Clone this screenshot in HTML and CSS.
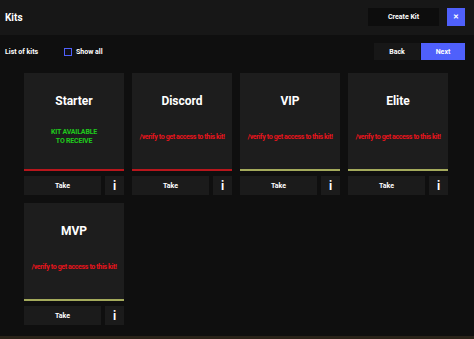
FILE: index.html
```html
<!DOCTYPE html>
<html lang="en">
<head>
    <meta charset="UTF-8">
    <meta name="viewport" content="width=device-width, initial-scale=1.0">
    <title>Kits</title>
    <link rel="stylesheet" href="styles.css">
</head>
<body>
    <div class="header">
        <h1>Kits</h1>
        <div class="header-actions">
            <button class="btn-dark create">Create Kit</button>
            <button class="btn-blue close">&#x2715;</button>
        </div>
    </div>

    <div class="toolbar">
        <span class="label">List of kits</span>
        <label class="show-all"><span class="checkbox"></span>Show all</label>
        <div class="pager">
            <button class="btn-dark back">Back</button>
            <button class="btn-blue next">Next</button>
        </div>
    </div>

    <div class="kits">
        <div class="kit">
            <div class="kit-panel red">
                <div class="kit-name">Starter</div>
                <div class="kit-status ok">KIT AVAILABLE<br>TO RECEIVE</div>
            </div>
            <div class="kit-actions"><button class="take">Take</button><button class="info">i</button></div>
        </div>
        <div class="kit">
            <div class="kit-panel red">
                <div class="kit-name">Discord</div>
                <div class="kit-status locked">/verify to get access to this kit!</div>
            </div>
            <div class="kit-actions"><button class="take">Take</button><button class="info">i</button></div>
        </div>
        <div class="kit">
            <div class="kit-panel olive">
                <div class="kit-name">VIP</div>
                <div class="kit-status locked">/verify to get access to this kit!</div>
            </div>
            <div class="kit-actions"><button class="take">Take</button><button class="info">i</button></div>
        </div>
        <div class="kit">
            <div class="kit-panel olive">
                <div class="kit-name">Elite</div>
                <div class="kit-status locked">/verify to get access to this kit!</div>
            </div>
            <div class="kit-actions"><button class="take">Take</button><button class="info">i</button></div>
        </div>
        <div class="kit">
            <div class="kit-panel olive">
                <div class="kit-name">MVP</div>
                <div class="kit-status locked">/verify to get access to this kit!</div>
            </div>
            <div class="kit-actions"><button class="take">Take</button><button class="info">i</button></div>
        </div>
    </div>
    <div class="footer-line"></div>
</body>
</html>
```
FILE: styles.css
```css
html, body {
    margin: 0;
    height: 100%;
}
body {
    font-family: Roboto, "Liberation Sans", sans-serif;
    background-color: #0f0f0f;
    color: #fff;
    display: flex;
    flex-direction: column;
    overflow: hidden;
}
button {
    font-family: inherit;
    border: none;
    color: #fff;
    cursor: pointer;
    padding: 0;
}
.header {
    height: 35px;
    background-color: #171717;
    display: flex;
    align-items: center;
    justify-content: space-between;
    padding: 0 9px 0 5px;
    flex-shrink: 0;
}
.header h1 {
    font-size: 10px;
    font-weight: 700;
    margin: 0;
}
.header-actions {
    display: flex;
    gap: 8px;
    align-self: flex-start;
    margin-top: 8px;
}
.btn-dark {
    background-color: #0d0d0d;
    font-size: 7px;
    font-weight: 700;
    height: 18px;
}
.btn-blue {
    background-color: #4f60fb;
    font-size: 7px;
    font-weight: 700;
    height: 18px;
}
.create {
    width: 71px;
}
.close {
    width: 18px;
}
.toolbar {
    display: flex;
    align-items: center;
    padding: 8px 9px 0 5px;
    height: 17px;
    flex-shrink: 0;
}
.label {
    font-size: 7px;
    font-weight: 700;
    width: 59px;
}
.show-all {
    display: flex;
    align-items: center;
    gap: 4px;
    font-size: 7px;
    font-weight: 700;
}
.checkbox {
    width: 6px;
    height: 6px;
    border: 1px solid #4f60fb;
    background-color: #101018;
}
.pager {
    margin-left: auto;
    display: flex;
    gap: 1px;
    height: 17px;
}
.pager button {
    height: 17px;
}
.back {
    width: 46px;
    background-color: #171717;
}
.next {
    width: 44px;
}
.kits {
    display: grid;
    grid-template-columns: repeat(4, 100px);
    gap: 8px;
    padding: 13px 0 0 24px;
}
.kit {
    display: flex;
    flex-direction: column;
    gap: 5px;
}
.kit-panel {
    height: 96px;
    background-color: #1d1d1d;
    border-bottom: 2px solid #b8161c;
    display: flex;
    flex-direction: column;
    align-items: center;
}
.kit-panel.olive {
    border-bottom-color: #a4aa5c;
}
.kit-name {
    font-size: 12px;
    font-weight: 700;
    line-height: 14px;
    margin-top: 21px;
}
.kit-status {
    height: 40px;
    margin-top: 9px;
    display: flex;
    align-items: center;
    justify-content: center;
    text-align: center;
    font-size: 7px;
    font-weight: 700;
    line-height: 9px;
    white-space: nowrap;
}
.kit-status.ok {
    color: #1fca1c;
    letter-spacing: -0.2px;
}
.kit-status.locked {
    color: #e8141c;
    letter-spacing: -0.35px;
}
.kit-actions {
    display: flex;
    gap: 4px;
    height: 19px;
}
.take {
    flex: 1;
    background-color: #1b1b1b;
    font-size: 7px;
    font-weight: 700;
}
.info {
    width: 19px;
    background-color: #1b1b1b;
    font-size: 12px;
    font-weight: 700;
}
.footer-line {
    margin-top: auto;
    height: 3px;
    background-color: #2a2319;
}
```
